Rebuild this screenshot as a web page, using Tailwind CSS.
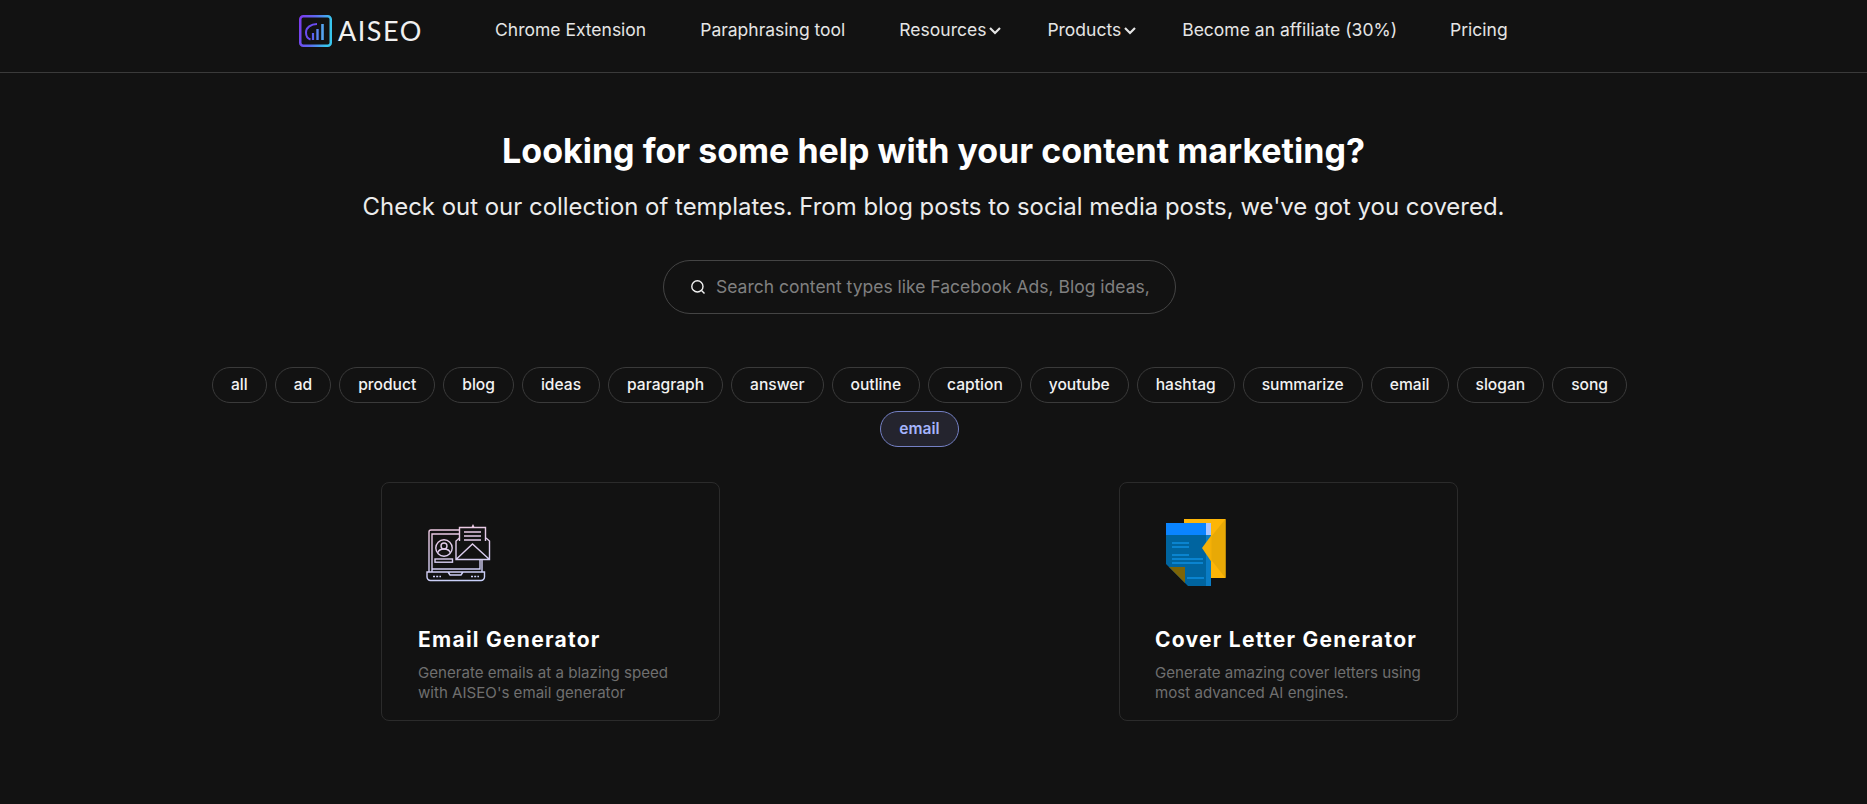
<!DOCTYPE html>
<html><head><meta charset="utf-8"><script src="https://cdn.jsdelivr.net/npm/@tailwindcss/browser@4"></script></head>
<body class="bg-[#121212] font-['Inter',sans-serif] overflow-hidden">
<div class="w-[1867px] h-[804px] bg-[#121212] text-white">
<header class="h-[73px] border-b border-[#3a3a3a] flex items-start pl-[299px] text-[17.500px] text-[#e5e5e5] leading-[20px]">
  <a class="flex items-center gap-[6px] mt-[15px] w-[196px]">
    <svg width="33" height="32" viewBox="0 0 33 32" fill="none"><defs><linearGradient id="lg" x1="0" y1="0" x2="1" y2="0.2"><stop offset="0" stop-color="#7c3aed"/><stop offset="0.5" stop-color="#5b6cf0"/><stop offset="1" stop-color="#38c5ee"/></linearGradient></defs><rect x="1.250" y="1.250" width="30.500" height="29.500" rx="3" stroke="url(#lg)" stroke-width="2.500"/><path d="M11.500 24.500c-3-1-4.500-4-4.500-7 0-5 5-8.500 11-8.500" stroke="#6a4cf0" stroke-width="2"/><path d="M14 25v-7" stroke="#5a62f0" stroke-width="2.200"/><path d="M18.500 25V14" stroke="#5a86f0" stroke-width="2.400"/><path d="M23.500 25V9" stroke="#55a4f0" stroke-width="2.600"/></svg>
    <span class="font-['Lato',sans-serif] text-[27px] leading-[32px] tracking-[1.500px] text-[#f0f0f0]">AISEO</span>
  </a>
  <nav class="flex mt-[20px]">
    <a class="whitespace-nowrap">Chrome Extension</a>
    <a class="ml-[54px] whitespace-nowrap">Paraphrasing tool</a>
    <a class="ml-[54px] flex items-center whitespace-nowrap">Resources<svg class="ml-[2px]" width="14" height="14" viewBox="0 0 14 14" fill="none" stroke="#e5e5e5" stroke-width="2.200"><path d="M2 5l5 5 5-5"/></svg></a>
    <a class="ml-[45px] flex items-center whitespace-nowrap">Products<svg class="ml-[2px]" width="14" height="14" viewBox="0 0 14 14" fill="none" stroke="#e5e5e5" stroke-width="2.200"><path d="M2 5l5 5 5-5"/></svg></a>
    <a class="ml-[45px] whitespace-nowrap">Become an affiliate (30%)</a>
    <a class="ml-[53px] whitespace-nowrap">Pricing</a>
  </nav>
</header>
<main class="flex flex-col items-center">
  <h1 class="mt-[56px] text-[34px] leading-[44px] font-bold text-center text-white">Looking for some help with your content marketing?</h1>
  <p class="mt-[18px] text-[23.950px] leading-[32px] text-center text-[#ececec]">Check out our collection of templates. From blog posts to social media posts, we've got you covered.</p>
  <div class="mr-[28px] mt-[37px] w-[513px] h-[54px] rounded-full border border-[#444] flex items-center pl-[26px]">
    <svg width="16" height="16" viewBox="0 0 16 16" fill="none" stroke="#f2f2f2" stroke-width="1.400"><circle cx="7.400" cy="7.400" r="5.600"/><path d="M11.500 11.500l3 3"/></svg>
    <input class="ml-[10px] w-[438px] bg-transparent outline-none text-[17.500px] placeholder:text-[#808080]" placeholder="Search content types like Facebook Ads, Blog ideas, etc.">
  </div>
  <div class="mr-[28px] mt-[53px] w-[1460px] flex flex-wrap justify-center gap-x-[8px] gap-y-[8px] text-[15.600px] font-medium text-[#f2f2f2]">
    <span class="h-[36px] px-[18px] rounded-full border border-[#3a3a3a] flex items-center">all</span>
    <span class="h-[36px] px-[18px] rounded-full border border-[#3a3a3a] flex items-center">ad</span>
    <span class="h-[36px] px-[18px] rounded-full border border-[#3a3a3a] flex items-center">product</span>
    <span class="h-[36px] px-[18px] rounded-full border border-[#3a3a3a] flex items-center">blog</span>
    <span class="h-[36px] px-[18px] rounded-full border border-[#3a3a3a] flex items-center">ideas</span>
    <span class="h-[36px] px-[18px] rounded-full border border-[#3a3a3a] flex items-center">paragraph</span>
    <span class="h-[36px] px-[18px] rounded-full border border-[#3a3a3a] flex items-center">answer</span>
    <span class="h-[36px] px-[18px] rounded-full border border-[#3a3a3a] flex items-center">outline</span>
    <span class="h-[36px] px-[18px] rounded-full border border-[#3a3a3a] flex items-center">caption</span>
    <span class="h-[36px] px-[18px] rounded-full border border-[#3a3a3a] flex items-center">youtube</span>
    <span class="h-[36px] px-[18px] rounded-full border border-[#3a3a3a] flex items-center">hashtag</span>
    <span class="h-[36px] px-[18px] rounded-full border border-[#3a3a3a] flex items-center">summarize</span>
    <span class="h-[36px] px-[18px] rounded-full border border-[#3a3a3a] flex items-center">email</span>
    <span class="h-[36px] px-[18px] rounded-full border border-[#3a3a3a] flex items-center">slogan</span>
    <span class="h-[36px] px-[18px] rounded-full border border-[#3a3a3a] flex items-center">song</span>
    <div class="w-full flex justify-center">
      <span class="h-[36px] px-[18px] rounded-full border border-[#7480c4] bg-[#24242e] text-[#a5b4fc] font-semibold flex items-center">email</span>
    </div>
  </div>
  <div class="mr-[28px] mt-[35px] w-[1077px] grid grid-cols-3 gap-[30px]">
    <article class="col-start-1 h-[239px] rounded-lg border border-[#2b2b2b] pl-[36px] pr-[30px] pt-[39px]">
      <svg class="ml-[7px]" width="66" height="60" viewBox="24 22 66 60" fill="none" stroke="url(#em)" stroke-width="1.400">
        <defs><linearGradient id="em" gradientUnits="userSpaceOnUse" x1="50" y1="22" x2="60" y2="82"><stop offset="0" stop-color="#f0c8e0"/><stop offset="1" stop-color="#c8d0fa"/></linearGradient></defs>
        <path d="M28 72V32a2 2 0 0 1 2-2h28M31 72V34h27M81 60v12M79 60v9H31M26 72h57.500v5a3.500 3.500 0 0 1-3.500 3.500H29.500a3.500 3.500 0 0 1-3.500-3.500zM47 72l2 3h11l2-3"/>
        <path d="M32 76.500h8M70 76.500h8" stroke-dasharray="2 1.200"/>
        <circle cx="43" cy="48" r="8.200"/><circle cx="43" cy="46" r="3"/><path d="M36.500 53c1-3 3.500-4 6.500-4s5.500 1 6.500 4"/>
        <rect x="34" y="59" width="17.500" height="3.200"/>
        <path d="M58.500 41v-13.500h26V41M71 27.500l1-2 1 2"/>
        <path d="M63 32h17M63 36h17M63 40h17" stroke-width="1.400"/>
        <path d="M58.500 38l-3.500 3v18.500h33.500V41l-3.500-3M55 59.500L71.500 44l17 15.500"/>
      </svg>
      <h3 class="mt-[44px] text-[21px] leading-[28px] font-bold tracking-[1.260px] text-white">Email Generator</h3>
      <p class="mt-[9px] text-[15.100px] leading-[20px] text-[#6f6f6f]">Generate emails at a blazing speed with AISEO's email generator</p>
    </article>
    <article class="col-start-3 h-[239px] rounded-lg border border-[#2b2b2b] pl-[35px] pr-[30px] pt-[36px]">
      <svg class="ml-[5px]" width="66" height="68" viewBox="20 19 66 68">
        <path d="M44 19h41.500v59H44z" fill="#fdb507"/>
        <path d="M62 48l23.500-29v59z" fill="#e8a906"/>
        <path d="M26 35h45v51H48L26 64z" fill="#00649f"/>
        <path d="M66 35h5v51h-5z" fill="#0a7cc4"/>
        <path d="M26 23h45v12H26z" fill="#0a84ff"/>
        <path d="M66 23h5v12h-5z" fill="#a9c4ff"/>
        <path d="M71.500 35l-9.500 13 9.500 14z" fill="#f4b006"/>
        <path d="M29 67h16v16z" fill="#7e6507"/>
        <path d="M32 42h17v2H32zM32 46h17v2H32zM32 54h17v2H32zM32 58h31v2H32zM32 62h31v2H32zM47 77h17v2H47z" fill="#0a84d0"/>
      </svg>
      <h3 class="mt-[39px] text-[21px] leading-[28px] font-bold tracking-[1.260px] text-white">Cover Letter Generator</h3>
      <p class="mt-[9px] text-[15.100px] leading-[20px] text-[#6f6f6f]">Generate amazing cover letters using most advanced AI engines.</p>
    </article>
  </div>
</main>
</div>
</body></html>
